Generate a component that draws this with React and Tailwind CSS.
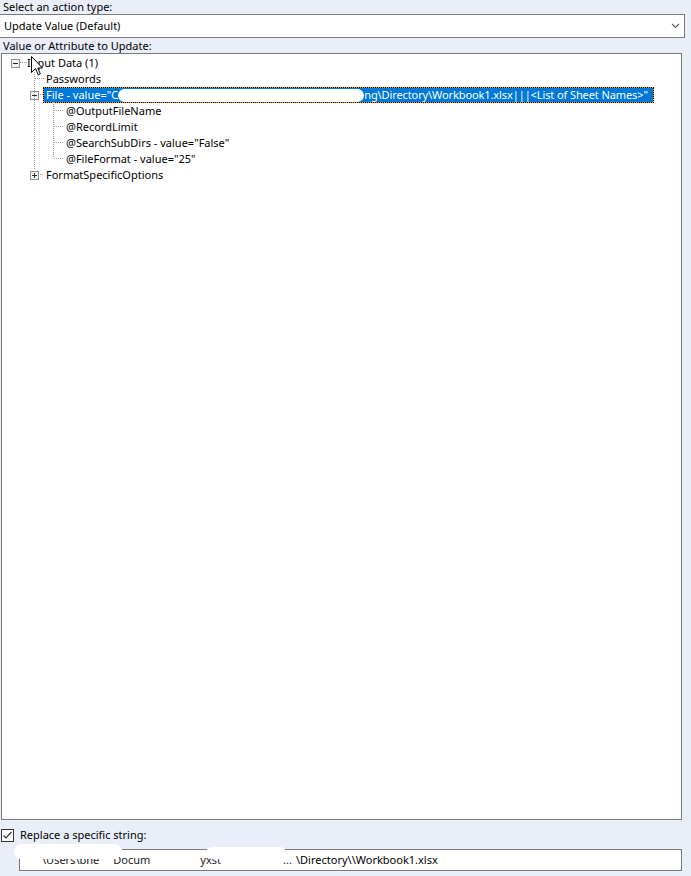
import React from 'react';

// little +/- boxes used by the tree view
function Expander({ open }) {
  return (
    <svg width="9" height="9" viewBox="0 0 9 9" className="shrink-0 block">
      <rect x="0.5" y="0.5" width="8" height="8" fill="#f4f4f4" stroke="#919191" />
      <line x1="2" y1="4.5" x2="7" y2="4.5" stroke="#2b2b2b" />
      {!open && <line x1="4.5" y1="2" x2="4.5" y2="7" stroke="#2b2b2b" />}
    </svg>
  );
}

function TreeLines() {
  const dot = { stroke: '#a0a0a0', strokeDasharray: '1 1', shapeRendering: 'crispEdges' };
  return (
    <svg width="80" height="130" className="absolute left-0 top-0 pointer-events-none">
      <line x1="18" y1="8.5" x2="25" y2="8.5" {...dot} />
      <line x1="32.5" y1="18" x2="32.5" y2="116" {...dot} />
      <line x1="33" y1="24.5" x2="42" y2="24.5" {...dot} />
      <line x1="38" y1="40.5" x2="42" y2="40.5" {...dot} />
      <line x1="38" y1="120.5" x2="42" y2="120.5" {...dot} />
      <line x1="51.5" y1="48" x2="51.5" y2="104" {...dot} />
      {[56, 72, 88, 104].map((y) => (
        <line key={y} x1="52" y1={y + 0.5} x2="62" y2={y + 0.5} {...dot} />
      ))}
    </svg>
  );
}

function Cursor() {
  return (
    <svg width="13" height="20" viewBox="0 0 13 20" className="absolute left-[29px] top-[2px] pointer-events-none">
      <path d="M0.5 0.5 L0.5 16.5 L4.5 12.5 L7.2 18.8 L9.3 17.9 L6.8 12 L11.5 12 Z" fill="#fff" stroke="#000" strokeLinejoin="miter" />
    </svg>
  );
}

const Blob = ({ className }) => <span className={`inline-block bg-white rounded-full ${className}`} />;

export default function App() {
  const attrs = ['@OutputFileName', '@RecordLimit', '@SearchSubDirs - value="False"', '@FileFormat - value="25"'];

  return (
    <div className="w-[691px] h-[876px] overflow-hidden bg-[#e9eef8] text-[11px] text-black font-['Noto_Sans',sans-serif]">
      <div className="h-[14px] pl-[3px] leading-[14px]">Select an action type:</div>
      <div className="ml-[-1px] w-[686px] h-[24px] border border-[#7a7a7a] bg-white flex items-center justify-between pl-[4px] pr-[4px]">
        <span className="leading-[16px]">Update Value (Default)</span>
        <svg width="9" height="6" viewBox="0 0 9 6">
          <path d="M1 1 L4.5 4.5 L8 1" fill="none" stroke="#606060" strokeWidth="1.1" />
        </svg>
      </div>
      <div className="h-[15px] pl-[3px] leading-[15px]">Value or Attribute to Update:</div>

      <div className="ml-[1px] w-[681px] h-[767px] border border-[#7a7a7a] bg-white">
        <div className="relative pt-[1px]">
          <TreeLines />
          <Cursor />
          <div className="h-[16px] flex items-center pl-[9px]">
            <Expander open />
            <span className="ml-[7px] leading-[16px]">Input Data (1)</span>
          </div>
          <div className="h-[16px] flex items-center pl-[44px]">
            <span className="leading-[16px]">Passwords</span>
          </div>
          <div className="h-[16px] flex items-center pl-[28px]">
            <Expander open />
            <div className="ml-[4px] h-[16px] w-[611px] bg-[#ff9a1a]">
              <div className="h-full border border-dotted border-black bg-[#0078d7] bg-clip-padding text-white flex items-center pl-[2px] whitespace-nowrap overflow-hidden">
                <span className="leading-[14px]">File - value="C</span>
                <Blob className="w-[246px] h-[13px] -my-px" />
                <span className="leading-[14px] tracking-[-0.1px]">ng\Directory\Workbook1.xlsx|||&lt;List of Sheet Names&gt;"</span>
              </div>
            </div>
          </div>
          {attrs.map((a) => (
            <div key={a} className="h-[16px] flex items-center pl-[64px]">
              <span className="leading-[16px]">{a}</span>
            </div>
          ))}
          <div className="h-[16px] flex items-center pl-[28px]">
            <Expander />
            <span className="ml-[7px] leading-[16px]">FormatSpecificOptions</span>
          </div>
        </div>
      </div>

      <div className="mt-[8px] h-[14px] flex items-center">
        <div className="ml-[1px] w-[13px] h-[13px] border border-[#333] bg-white flex items-center justify-center">
          <svg width="11" height="11" viewBox="0 0 11 11">
            <path d="M1.5 5.5 L4 8 L9.5 2" fill="none" stroke="#333" strokeWidth="1.2" />
          </svg>
        </div>
        <span className="ml-[6px] leading-[14px]">Replace a specific string:</span>
      </div>

      <div className="mt-[7px] ml-[19px] w-[663px] h-[22px] border border-[#7a7a7a] bg-white flex items-center relative">
        <div className="w-[276px] shrink-0 overflow-hidden whitespace-nowrap pl-[22px] text-[#222]">
          <span>\Users\bhe</span>
          <span className="ml-[14px]">Docum</span>
          <span className="ml-[50px]">yxst</span>
          <span className="ml-[62px]">...</span>
        </div>
        <span className="whitespace-nowrap">\Directory\\Workbook1.xlsx</span>
        {/* white scribbles over the first part of the path */}
        <span className="absolute left-[-6px] top-[-6px] w-[108px] h-[15px] bg-white rounded-full" />
        <span className="absolute left-[106px] top-[2px] w-[44px] h-[5px] bg-white rounded-full" />
        <span className="absolute left-[186px] top-[-3px] w-[80px] h-[12px] bg-white rounded-full" />
      </div>
    </div>
  );
}
